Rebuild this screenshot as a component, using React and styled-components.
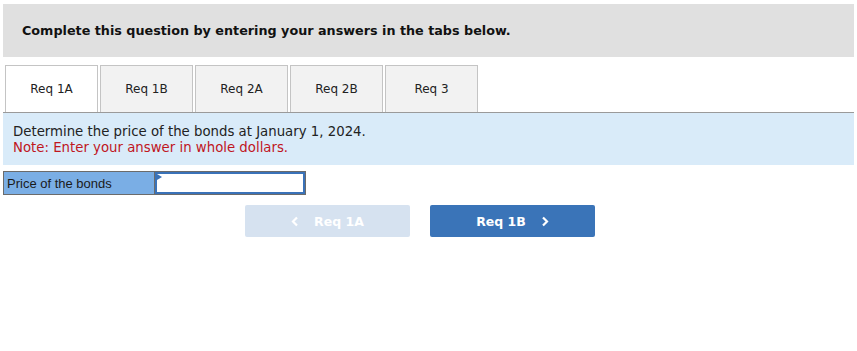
import React from 'react'
import styled, {createGlobalStyle} from 'styled-components'

const GlobalStyle = createGlobalStyle`
  body {
    margin: 0;
    background: #fff;
    font-family: "DejaVu Sans", Verdana, sans-serif;
  }
`

const Page = styled.div`
  padding: 4px 3px;
  width: 851px;
`

const Header = styled.div`
  background: #e0e0e0;
  height: 53px;
  padding: 0 19px;
  display: flex;
  align-items: center;
  font-size: 12.75px;
  font-weight: bold;
  color: #111;
`

const TabList = styled.ul`
  list-style-type: none;
  margin: 8px 0 0;
  padding: 0 0 0 2px;
  display: flex;
  gap: 2px;
  border-bottom: 1px solid #9a9a9a;
`

const Tab = styled.li`
  width: 91px;
  height: 46px;
  display: flex;
  align-items: center;
  justify-content: center;
  border: 1px solid #c4c4c4;
  border-bottom: none;
  background: ${props => props.active ? '#fff' : '#f2f2f2'};
  font-size: 12px;
  color: #222;
`

const Prompt = styled.div`
  background: #d9ebf9;
  padding: 11px 10px 9px;
  font-size: 13.3px;
  line-height: 16px;
  color: #222;
`

const Note = styled.div`
  color: #c0161e;
`

const Row = styled.div`
  margin-top: 6px;
  display: flex;
  width: 301px;
  height: 22px;
  border: 1px solid #6b6b6b;
`

const Label = styled.div`
  width: 151px;
  background: #7aaee5;
  border-right: 1px solid #6b6b6b;
  font-family: "Liberation Sans", Arial, sans-serif;
  font-size: 13px;
  color: #1a1a1a;
  display: flex;
  align-items: center;
  padding-left: 3px;
  box-sizing: border-box;
`

const InputWrap = styled.div`
  position: relative;
  flex: 1;
  border: 2px solid #3a72b8;
  background: #fff;
`

const Marker = styled.span`
  position: absolute;
  left: 0;
  top: 0;
  width: 0;
  height: 0;
  border-top: 3px solid transparent;
  border-bottom: 3px solid transparent;
  border-left: 5px solid #3a72b8;
`

const Field = styled.input`
  border: none;
  outline: none;
  width: 100%;
  height: 100%;
  box-sizing: border-box;
  background: transparent;
`

const Nav = styled.div`
  display: flex;
  gap: 20px;
  margin: 10px 0 0 242px;
`

const NavButton = styled.button`
  width: 165px;
  height: 32px;
  border: none;
  border-radius: 2px;
  background: ${props => props.disabled ? '#d6e2f0' : '#3a74b8'};
  color: #fff;
  font-family: "DejaVu Sans", Verdana, sans-serif;
  font-size: 12.5px;
  font-weight: bold;
  display: flex;
  align-items: center;
  justify-content: center;
  gap: 15px;
  padding: 0;
`

const Chevron = ({dir}) => (
  <svg width="8" height="11" viewBox="0 0 8 11">
    <path
      d={dir === 'left' ? 'M6 1.5 L2 5.5 L6 9.5' : 'M2 1.5 L6 5.5 L2 9.5'}
      fill="none"
      stroke="#fff"
      strokeWidth="2.2"
    />
  </svg>
)

const tabs = ['Req 1A', 'Req 1B', 'Req 2A', 'Req 2B', 'Req 3']

export default function App() {
  return (
    <Page>
      <GlobalStyle />
      <Header>Complete this question by entering your answers in the tabs below.</Header>
      <TabList>
        {tabs.map((t, i) => (
          <Tab key={t} active={i === 0}>{t}</Tab>
        ))}
      </TabList>
      <Prompt>
        Determine the price of the bonds at January 1, 2024.
        <Note>Note: Enter your answer in whole dollars.</Note>
      </Prompt>
      <Row>
        <Label>Price of the bonds</Label>
        <InputWrap>
          <Marker />
          <Field type="text" />
        </InputWrap>
      </Row>
      <Nav>
        <NavButton disabled>
          <Chevron dir="left" />
          Req 1A
        </NavButton>
        <NavButton>
          Req 1B
          <Chevron dir="right" />
        </NavButton>
      </Nav>
    </Page>
  )
}
